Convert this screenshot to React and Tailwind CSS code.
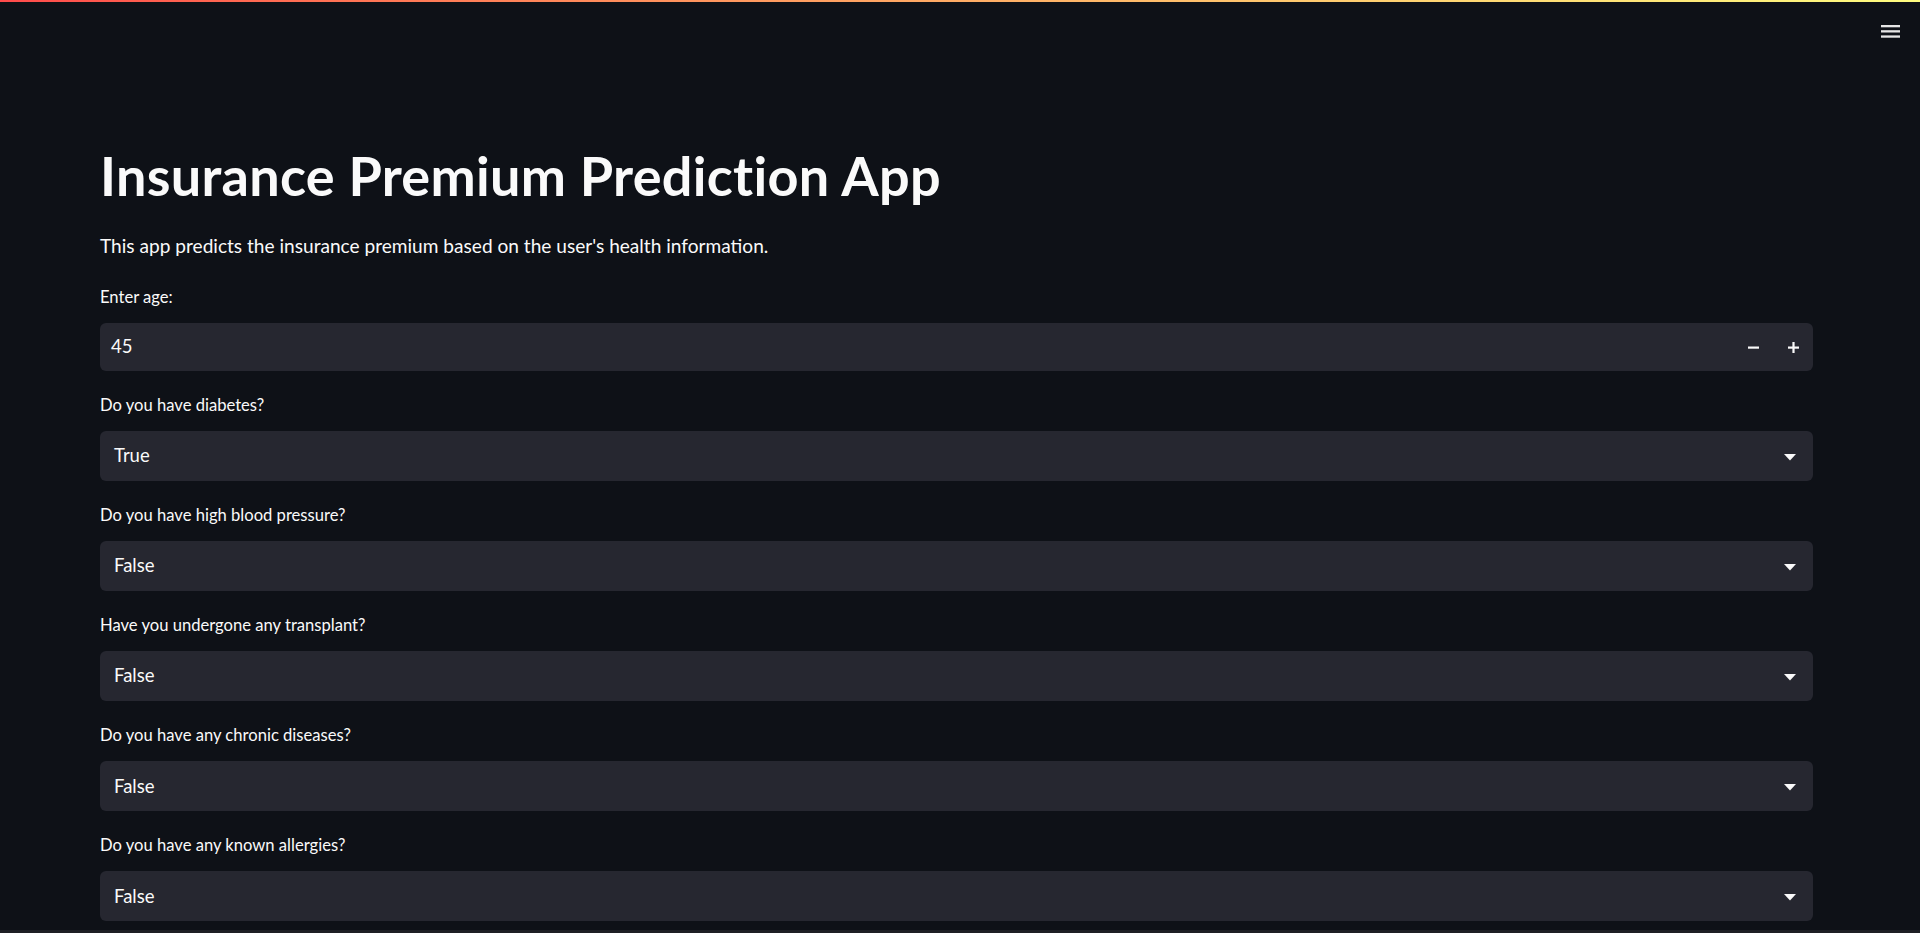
import { useState } from "react";

const FONT = { fontFamily: "Lato, 'Open Sans', sans-serif" };

const questions = [
  { label: "Do you have diabetes?", value: "True" },
  { label: "Do you have high blood pressure?", value: "False" },
  { label: "Have you undergone any transplant?", value: "False" },
  { label: "Do you have any chronic diseases?", value: "False" },
  { label: "Do you have any known allergies?", value: "False" },
];

const Label = ({ children }) => (
  <div className="h-[30px] text-[16.6px] leading-[30px] text-[#fafafa] mb-[11.5px]">{children}</div>
);

function NumberInput({ label, value }) {
  return (
    <div>
      <Label>{label}</Label>
      <div className="flex h-[48px] items-center rounded-[6px] bg-[#262730]">
        <div className="flex-1 pl-[11px] text-[18.5px] text-[#fafafa]">{value}</div>
        <button className="flex h-full w-[40px] items-center justify-center">
          <svg width="11" height="11" viewBox="0 0 11 11">
            <rect x="0" y="4.5" width="11" height="2.2" fill="#fafafa" />
          </svg>
        </button>
        <button className="flex h-full w-[40px] items-center justify-center">
          <svg width="11" height="11" viewBox="0 0 11 11">
            <rect x="0" y="4.5" width="11" height="2.2" fill="#fafafa" />
            <rect x="4.4" y="0" width="2.2" height="11" fill="#fafafa" />
          </svg>
        </button>
      </div>
    </div>
  );
}

function SelectBox({ label, value }) {
  return (
    <div>
      <Label>{label}</Label>
      <div className="flex h-[50px] items-center rounded-[6px] bg-[#262730] pl-[14px] pr-[17px]">
        <div className="flex-1 text-[18.5px] text-[#fafafa]">{value}</div>
        <svg width="12" height="7" viewBox="0 0 12 7" className="mt-[3px]">
          <path d="M0 0h12L6 6.5z" fill="#fafafa" />
        </svg>
      </div>
    </div>
  );
}

export default function App() {
  const [age] = useState(45);

  return (
    <div className="flex h-[933px] flex-col overflow-hidden bg-[#0e1117]" style={FONT}>
      <div className="h-[2px] bg-gradient-to-r from-[#ff4b4b] to-[#fffd80]" />
      <div className="flex h-[58px] items-center justify-end pr-[20px]">
        <svg width="19" height="13" viewBox="0 0 19 13">
          <rect y="0" width="19" height="2.3" fill="#e6e6e6" />
          <rect y="5.2" width="19" height="2.3" fill="#e6e6e6" />
          <rect y="10.4" width="19" height="2.3" fill="#e6e6e6" />
        </svg>
      </div>

      <main className="flex-1 pl-[100px] pr-[107px]">
        <h1 className="mt-[84px] text-[54px] font-bold leading-[64px] tracking-[0.3px] text-[#fafafa]">
          Insurance Premium Prediction App
        </h1>
        <p className="mt-[23px] text-[19.1px] leading-[30px] text-[#fafafa]">
          This app predicts the insurance premium based on the user's health information.
        </p>

        <div className="mt-[20.5px] flex flex-col gap-[18.6px]">
          <NumberInput label="Enter age:" value={age} />
          {questions.map((q) => (
            <SelectBox key={q.label} label={q.label} value={q.value} />
          ))}
        </div>
      </main>

      <div className="h-[3px] bg-[#1e1f24]" />
    </div>
  );
}
